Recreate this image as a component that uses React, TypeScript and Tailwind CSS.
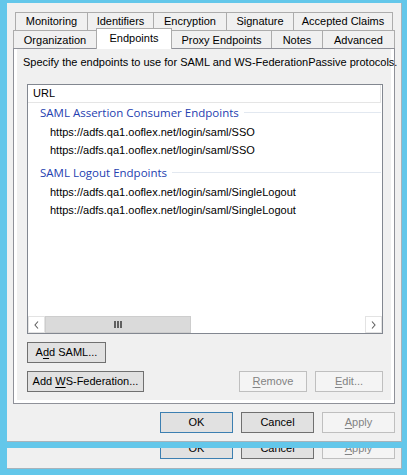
import React from "react";

const font = { fontFamily: '"Liberation Sans", Arial, sans-serif' };

const rowOne = [
  { label: "Monitoring", w: "w-[72px]" },
  { label: "Identifiers", w: "w-[66px]" },
  { label: "Encryption", w: "w-[73px]" },
  { label: "Signature", w: "w-[67px]" },
  { label: "Accepted Claims", w: "w-[100px]" },
];

const groups = [
  {
    title: "SAML Assertion Consumer Endpoints",
    items: [
      "https://adfs.qa1.ooflex.net/login/saml/SSO",
      "https://adfs.qa1.ooflex.net/login/saml/SSO",
    ],
  },
  {
    title: "SAML Logout Endpoints",
    items: [
      "https://adfs.qa1.ooflex.net/login/saml/SingleLogout",
      "https://adfs.qa1.ooflex.net/login/saml/SingleLogout",
    ],
  },
];

function Btn({
  children,
  w,
  kind = "normal",
}: {
  children: React.ReactNode;
  w: string;
  kind?: "normal" | "default" | "dark" | "disabled";
}) {
  const look =
    kind === "default"
      ? "bg-[#e1e1e1] border-[#3c7fb1] text-black"
      : kind === "dark"
      ? "bg-[#e1e1e1] border-[#707070] text-black"
      : kind === "disabled"
      ? "bg-[#f4f4f4] border-[#bfbfbf] text-[#838383]"
      : "bg-[#e1e1e1] border-[#adadad] text-black";
  return (
    <div
      className={`${w} h-[21px] shrink-0 border flex items-center justify-center text-[11px] leading-[13px] ${look}`}
    >
      <span className="whitespace-pre">{children}</span>
    </div>
  );
}

function U({ children }: { children: React.ReactNode }) {
  return <span className="underline underline-offset-[2px]">{children}</span>;
}

function DialogButtons({ pr }: { pr: string }) {
  return (
    <div className={`flex justify-end gap-2 ${pr}`}>
      <Btn w="w-[73px]" kind="default">
        OK
      </Btn>
      <Btn w="w-[73px]" kind="dark">
        Cancel
      </Btn>
      <Btn w="w-[73px]" kind="disabled">
        <U>A</U>pply
      </Btn>
    </div>
  );
}

function Arrow({ dir }: { dir: "left" | "right" }) {
  return (
    <div className="w-[17px] h-full shrink-0 bg-white border border-[#e3e3e3] flex items-center justify-center">
      <svg width="5" height="8" viewBox="0 0 5 8">
        <polyline
          points={dir === "left" ? "4,0.5 1,4 4,7.5" : "1,0.5 4,4 1,7.5"}
          fill="none"
          stroke="#606060"
          strokeWidth="1.1"
        />
      </svg>
    </div>
  );
}

export default function App() {
  return (
    <div
      className="w-[407px] h-[475px] bg-[#63c7ea] pt-[3px] pl-[7px] overflow-hidden text-black"
      style={font}
    >
      {/* MAIN WINDOW */}
      <div className="w-[395px] h-[439px] bg-[#f0f0f0] border-b border-r border-[#a7b3bb] pt-[9px] px-[6px]">
        {/* TABS ROW 1 */}
        <div className="flex pl-[2px] h-[18px]">
          {rowOne.map((t, i) => (
            <div
              key={t.label}
              className={`${t.w} h-[18px] border-t border-l border-[#acacac] ${
                i === rowOne.length - 1 ? "border-r" : ""
              } flex items-center justify-center text-[11px] leading-[13px]`}
            >
              {t.label}
            </div>
          ))}
        </div>

        {/* TABS ROW 2 */}
        <div className="flex items-end h-[18px] relative z-10">
          <div className="w-[83px] h-[18px] border-t border-l border-[#acacac] flex items-center justify-center text-[11px] leading-[13px] pt-[2px]">
            Organization
          </div>
          <div className="w-[76px] h-[21px] -mb-px bg-white border-t border-l border-r border-[#acacac] flex justify-center text-[11px] leading-[13px] pt-[3px]">
            Endpoints
          </div>
          <div className="w-[99px] h-[18px] border-t border-[#acacac] flex items-center justify-center text-[11px] leading-[13px] pt-[2px]">
            Proxy Endpoints
          </div>
          <div className="w-[51px] h-[18px] border-t border-l border-[#acacac] flex items-center justify-center text-[11px] leading-[13px] pt-[2px]">
            Notes
          </div>
          <div className="w-[73px] h-[18px] border-t border-l border-r border-[#acacac] flex items-center justify-center text-[11px] leading-[13px] pt-[2px]">
            Advanced
          </div>
        </div>

        {/* TAB PAGE */}
        <div className="w-[382px] h-[356px] border border-[#8f9199] bg-white px-[3px] pb-[3px]">
          <div className="h-full bg-[#f0f0f0] pt-[7px]">
            <p className="pl-[6px] text-[11px] leading-[13px] whitespace-nowrap">
              Specify the endpoints to use for SAML and WS-FederationPassive protocols.
            </p>

            {/* LIST VIEW */}
            <div className="ml-[10px] mt-[15px] w-[356px] h-[250px] border border-[#828790] bg-white flex flex-col">
              <div className="h-[18px] shrink-0 border-b border-[#e5e5e5] flex items-center pl-[5px] text-[11px] leading-[13px] mr-px border-r">
                URL
              </div>

              <div className="flex-1">
                {groups.map((g, gi) => (
                  <div key={g.title} className={gi > 0 ? "mt-[4px]" : ""}>
                    <div className="h-[20px] flex items-center pl-[12px] pr-px">
                      <span
                        className="text-[#2440b0] text-[11.5px] leading-[14px] whitespace-nowrap"
                        style={{ fontFamily: '"Open Sans", "Noto Sans", sans-serif' }}
                      >
                        {g.title}
                      </span>
                      <div className="flex-1 h-px bg-[#e2e8f0] ml-[5px] -mt-[2px]" />
                    </div>
                    {g.items.map((it, ii) => (
                      <div
                        key={ii}
                        className="h-[18px] flex items-center pl-[22px] text-[11px] leading-[13px] whitespace-nowrap"
                      >
                        {it}
                      </div>
                    ))}
                  </div>
                ))}
              </div>

              {/* HORIZONTAL SCROLLBAR */}
              <div className="h-[17px] shrink-0 flex bg-white">
                <Arrow dir="left" />
                <div className="w-[146px] h-full bg-[#dadada] border border-[#cdcdcd] flex items-center justify-center gap-[1px]">
                  <div className="w-[2px] h-[7px] bg-[#606060]" />
                  <div className="w-[2px] h-[7px] bg-[#606060]" />
                  <div className="w-[2px] h-[7px] bg-[#606060]" />
                </div>
                <div className="flex-1" />
                <Arrow dir="right" />
              </div>
            </div>

            {/* ACTIONS */}
            <div className="ml-[10px] mt-[8px] w-[356px]">
              <Btn w="w-[79px]" kind="dark">
                A<U>d</U>d SAML...
              </Btn>
              <div className="flex mt-[8px]">
                <Btn w="w-[117px]" kind="dark">
                  Add <U>W</U>S-Federation...
                </Btn>
                <div className="flex-1" />
                <div className="flex gap-2">
                  <Btn w="w-[68px]" kind="disabled">
                    <U>R</U>emove
                  </Btn>
                  <Btn w="w-[68px]" kind="disabled">
                    <U>E</U>dit...
                  </Btn>
                </div>
              </div>
            </div>
          </div>
        </div>

        <div className="mt-[8px]">
          <DialogButtons pr="pr-0" />
        </div>
      </div>

      {/* SECOND WINDOW BEHIND */}
      <div className="mt-[6px] w-[395px] h-[21px] bg-[#f0f0f0] border-b border-r border-[#a7b3bb] overflow-hidden">
        <div className="-mt-[10px]">
          <DialogButtons pr="pr-[6px]" />
        </div>
      </div>
    </div>
  );
}
